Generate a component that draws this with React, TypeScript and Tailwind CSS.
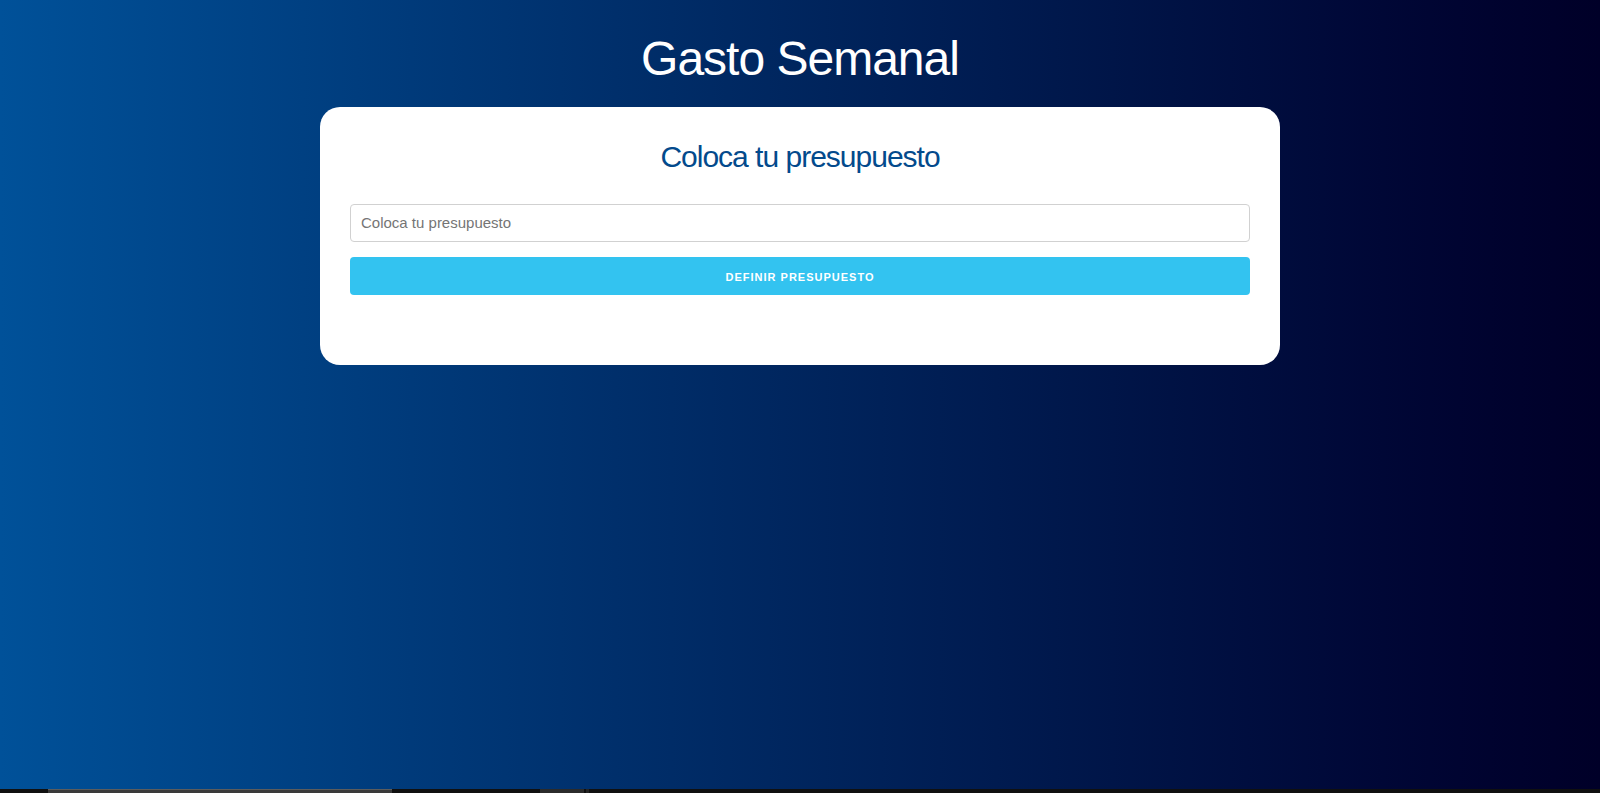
import React, { useState } from 'react';

export default function App() {
  const [budget, setBudget] = useState('');

  return (
    <div className="flex h-[793px] flex-col font-['Liberation_Sans',Arial,sans-serif]">
      <main className="flex-1 bg-gradient-to-r from-[#005199] to-[#000028] pt-[30px]">
        <h1 className="mb-[19px] text-center text-[48px] font-normal leading-[1.2] tracking-[-1px] text-white">
          Gasto Semanal
        </h1>

        <div className="mx-auto w-[960px] rounded-[20px] bg-white px-[30px] pb-[70px] pt-[30px]">
          <h2 className="text-center text-[30px] font-normal leading-[1.3] tracking-[-1px] text-[#034a8c]">
            Coloca tu presupuesto
          </h2>

          <form
            className="mt-[28px] flex flex-col gap-[15px]"
            onSubmit={(e) => e.preventDefault()}
          >
            <input
              type="number"
              value={budget}
              onChange={(e) => setBudget(e.target.value)}
              placeholder="Coloca tu presupuesto"
              className="h-[38px] w-full rounded-[4px] border border-[#d1d1d1] bg-white px-[10px] text-[15px] text-[#222] placeholder:text-[#757575] focus:border-[#33c3f0] focus:outline-none"
            />
            <button
              type="submit"
              className="h-[38px] w-full rounded-[4px] bg-[#33c3f0] pt-[3px] text-[11px] font-bold uppercase tracking-[1px] text-white"
            >
              Definir presupuesto
            </button>
          </form>
        </div>
      </main>

      {/* barra inferior */}
      <div className="flex h-[4px] items-stretch bg-[#101010]">
        <div className="ml-[48px] w-[344px] border-t border-[#5c5c5c] bg-[#3a3a3a]" />
        <div className="ml-[148px] w-[44px] bg-[#2b2b2b]" />
        <div className="ml-[2px] w-[3px] bg-[#242424]" />
      </div>
    </div>
  );
}
